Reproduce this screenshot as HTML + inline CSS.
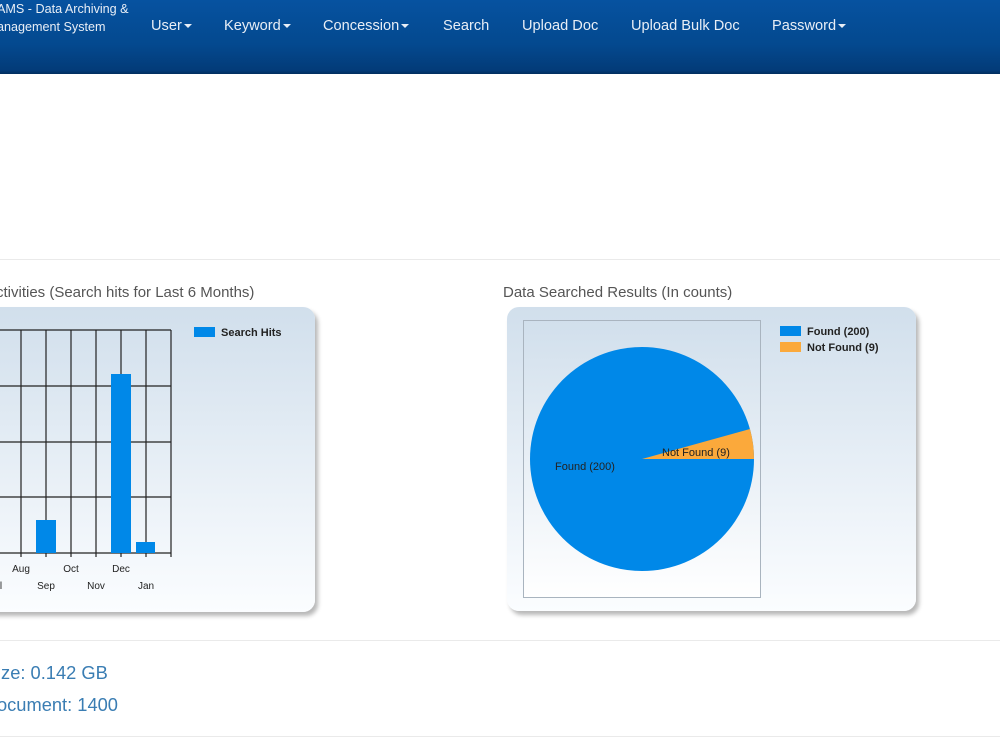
<!DOCTYPE html>
<html><head><meta charset="utf-8"><style>
*{margin:0;padding:0;box-sizing:border-box}
body{width:1000px;height:750px;overflow:hidden;background:#fff;font-family:"Liberation Sans",Arial,sans-serif;position:relative}
.nav{position:absolute;left:0;top:0;width:1000px;height:74px;background:linear-gradient(#0652a0 0%,#04498f 60%,#033b78 95%,#022e5e 100%)}
.nav span{position:absolute;color:#e8eef6;font-size:14.6px;top:18px}
.brand{position:absolute;color:#e8eef6;font-size:12.6px;line-height:18px;left:-3px;top:0}
.car{display:inline-block;width:0;height:0;border-left:4px solid transparent;border-right:4px solid transparent;border-top:4px solid #e8eef6;vertical-align:middle;margin-left:2px}
.hr{position:absolute;left:0;width:1000px;height:1px;background:#eaeaea}
.t{position:absolute;color:#555;font-size:15px}
.panel{position:absolute;border-radius:12px;background:linear-gradient(#d1dfec,#fbfdff);box-shadow:3px 4px 4px #b8b8b8}
.lg{position:absolute;font-size:11px;font-weight:bold;color:#222}
.sw{display:inline-block;width:21px;height:10px;vertical-align:-1px;margin-right:6px}
.info{position:absolute;color:#3a7db3;font-size:18.3px}
</style></head><body>
<div class="nav">
<div class="brand">AMS - Data Archiving &amp;<br>anagement System</div>
<span style="left:151px">User<i class="car"></i></span>
<span style="left:224px">Keyword<i class="car"></i></span>
<span style="left:323px">Concession<i class="car"></i></span>
<span style="left:443px">Search</span>
<span style="left:522px">Upload Doc</span>
<span style="left:631px">Upload Bulk Doc</span>
<span style="left:772px">Password<i class="car"></i></span>
</div>
<div class="hr" style="top:259px"></div>
<div class="t" style="left:-4px;top:284px">ctivities (Search hits for Last 6 Months)</div>
<div class="t" style="left:503px;top:284px">Data Searched Results (In counts)</div>
<div class="panel" style="left:-20px;top:307px;width:335px;height:305px"></div>
<div class="panel" style="left:507px;top:307px;width:409px;height:304px"></div>
<svg style="position:absolute;left:0;top:0" width="1000" height="750">
<defs><linearGradient id="g" x1="0" y1="0" x2="0" y2="1"><stop offset="0" stop-color="#d1dfec"/><stop offset="1" stop-color="#fff"/></linearGradient></defs>
<g stroke="#222" stroke-width="1.2" fill="none">
<path d="M0 330H171M0 386H171M0 442H171M0 497H171M0 553H171"/>
<path d="M21 330V557M46 330V557M71 330V557M96 330V557M121 330V557M146 330V557M171 330V557"/>
</g>
<g fill="#0088e8"><rect x="36" y="520" width="20" height="33"/><rect x="111" y="374" width="20" height="179"/><rect x="136" y="542" width="19" height="11"/></g>
<g font-family="Liberation Sans,Arial,sans-serif" font-size="10" fill="#222" text-anchor="middle">
<text x="21" y="572">Aug</text><text x="71" y="572">Oct</text><text x="121" y="572">Dec</text>
<text x="46" y="589">Sep</text><text x="96" y="589">Nov</text><text x="146" y="589">Jan</text><text x="1" y="589">l</text>
</g>
<rect x="523.5" y="320.5" width="237" height="277" fill="url(#g)" stroke="#a9b4bf"/>
<circle cx="642" cy="459" r="112" fill="#0088e8"/>
<path d="M642 459L750 429A112 112 0 0 1 754 459Z" fill="#fba93b"/>
<g font-family="Liberation Sans,Arial,sans-serif" font-size="11" fill="#222">
<text x="555" y="470">Found (200)</text><text x="662" y="456">Not Found (9)</text></g>
</svg>
<div class="lg" style="left:194px;top:327px"><i class="sw" style="background:#0088e8"></i>Search Hits</div>
<div class="lg" style="left:780px;top:326px"><i class="sw" style="background:#0088e8"></i>Found (200)</div>
<div class="lg" style="left:780px;top:342px"><i class="sw" style="background:#fba93b"></i>Not Found (9)</div>
<div class="hr" style="top:640px"></div>
<div class="info" style="left:-3px;top:662px">ize: 0.142 GB</div>
<div class="info" style="left:-3px;top:694px">ocument: 1400</div>
<div class="hr" style="top:736px"></div>
</body></html>
